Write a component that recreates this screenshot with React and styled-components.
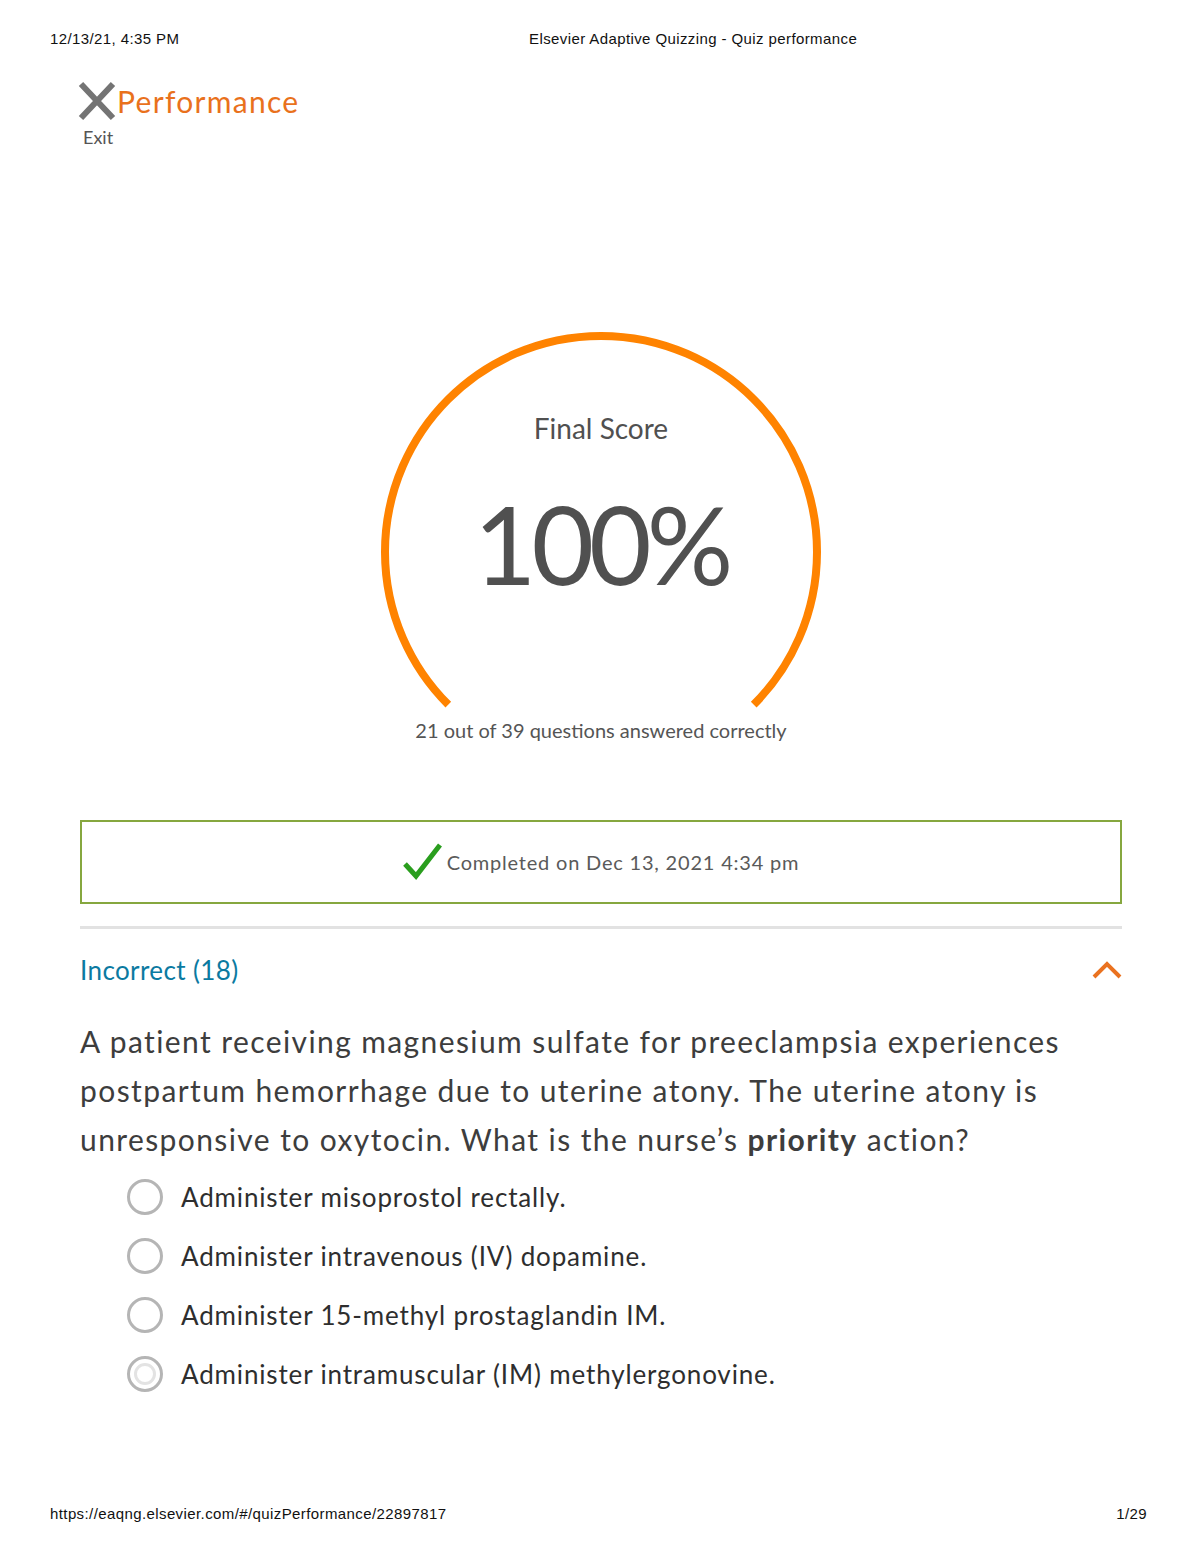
import React from 'react';
import styled, { createGlobalStyle } from 'styled-components';

const GlobalStyle = createGlobalStyle`
  html, body {
    margin: 0;
    padding: 0;
    background: #ffffff;
  }
  body {
    font-family: Lato, "Open Sans", sans-serif;
    color: #505050;
  }
`;

const Page = styled.div`
  width: 1200px;
  min-height: 1553px;
  display: flex;
  flex-direction: column;
  box-sizing: border-box;
`;

const PrintBar = styled.div`
  display: flex;
  align-items: center;
  padding: 0 53px 0 50px;
  height: 20px;
  font-family: "Liberation Sans", Arial, sans-serif;
  font-size: 15px;
  letter-spacing: 0.4px;
  color: #111;
  margin-top: ${(p) => (p.$bottom ? 'auto' : '28px')};
  margin-bottom: ${(p) => (p.$bottom ? '30px' : '0')};
  justify-content: ${(p) => (p.$bottom ? 'space-between' : 'flex-start')};
`;

const PrintDate = styled.span`
  width: 479px;
`;

const Content = styled.main`
  padding: 0 78px 0 80px;
  display: flex;
  flex-direction: column;
`;

const TopBar = styled.div`
  margin-top: 33px;
  display: flex;
  flex-direction: column;
  align-items: flex-start;
`;

const TitleRow = styled.div`
  display: flex;
  align-items: center;
  margin-left: -3px;
`;

const Title = styled.h1`
  margin: 0;
  font-weight: 400;
  font-size: 30px;
  color: #e9711c;
  letter-spacing: 1.3px;
  line-height: 40px;
`;

const ExitLabel = styled.span`
  font-size: 18px;
  color: #555;
  margin: 5px 0 0 3px;
  line-height: 22px;
`;

const Gauge = styled.div`
  position: relative;
  align-self: center;
  width: 448px;
  height: 384px;
  margin-top: 180px;
  display: flex;
  flex-direction: column;
  align-items: center;
`;

const GaugeArc = styled.svg`
  position: absolute;
  inset: 0;
`;

const GaugeLabel = styled.div`
  margin-top: 83px;
  font-size: 28px;
  line-height: 34px;
  color: #505050;
`;

const GaugeValue = styled.div`
  margin-top: 44px;
  font-size: 108px;
  line-height: 1;
  color: #505050;
  letter-spacing: -5px;
`;

const Caption = styled.div`
  align-self: center;
  margin-top: 5px;
  font-size: 20px;
  line-height: 26px;
  color: #555;
`;

const CompletedBox = styled.div`
  margin-top: 77px;
  height: 80px;
  border: 2px solid #86a73f;
  display: flex;
  align-items: center;
  justify-content: center;
  gap: 4px;
  font-size: 20px;
  letter-spacing: 0.8px;
  color: #5a5a5a;
`;

const Divider = styled.hr`
  margin: 22px 0 0;
  border: none;
  height: 3px;
  background: #e2e2e2;
`;

const SectionHead = styled.div`
  margin-top: 24px;
  display: flex;
  align-items: center;
  justify-content: space-between;
`;

const SectionTitle = styled.h2`
  margin: 0;
  font-weight: 400;
  font-size: 26px;
  line-height: 34px;
  letter-spacing: 0.4px;
  color: #0b7aa1;
`;

const Question = styled.p`
  margin: 30px 0 0;
  font-size: 30px;
  line-height: 49px;
  letter-spacing: 1.4px;
  color: #3d3d3d;
  strong {
    font-weight: 700;
  }
`;

const Options = styled.ul`
  list-style: none;
  margin: 15px 0 0;
  padding: 0 0 0 47px;
  display: flex;
  flex-direction: column;
  gap: 23px;
`;

const Option = styled.li`
  display: flex;
  align-items: center;
  gap: 18px;
  font-size: 26px;
  line-height: 36px;
  letter-spacing: 0.85px;
  color: #2e2e2e;
`;

const Radio = styled.span`
  width: 30px;
  height: 30px;
  border-radius: 50%;
  border: 3px solid #b5b5b5;
  flex-shrink: 0;
  display: flex;
  align-items: center;
  justify-content: center;
  &::after {
    content: '';
    width: 16px;
    height: 16px;
    border-radius: 50%;
    border: ${(p) => (p.$checked ? '3px solid #e3e3e3' : 'none')};
  }
`;

const CloseIcon = () => (
  <svg width="40" height="40" viewBox="0 0 40 40">
    <path d="M4 3 L36 37 M36 3 L4 37" stroke="#747474" strokeWidth="6" />
  </svg>
);

const CheckIcon = () => (
  <svg width="40" height="40" viewBox="0 0 40 40">
    <path d="M2 22 L13 34 L37 3" fill="none" stroke="#2a9e1e" strokeWidth="5" strokeLinejoin="miter" />
  </svg>
);

const ChevronUp = () => (
  <svg width="30" height="20" viewBox="0 0 30 20">
    <path d="M2 17 L15 4 L28 17" fill="none" stroke="#ea7220" strokeWidth="4" />
  </svg>
);

const options = [
  { text: 'Administer misoprostol rectally.' },
  { text: 'Administer intravenous (IV) dopamine.' },
  { text: 'Administer 15-methyl prostaglandin IM.' },
  { text: 'Administer intramuscular (IM) methylergonovine.', checked: true },
];

const App = () => {
  return (
    <Page>
      <GlobalStyle />
      <PrintBar>
        <PrintDate>12/13/21, 4:35 PM</PrintDate>
        <span>Elsevier Adaptive Quizzing - Quiz performance</span>
      </PrintBar>
      <Content>
        <TopBar>
          <TitleRow>
            <CloseIcon />
            <Title>Performance</Title>
          </TitleRow>
          <ExitLabel>Exit</ExitLabel>
        </TopBar>

        <Gauge>
          <GaugeArc width="448" height="384" viewBox="0 0 448 384">
            <path
              d="M71.3 376.7 A216 216 0 1 1 376.7 376.7"
              fill="none"
              stroke="#ff8300"
              strokeWidth="8"
            />
          </GaugeArc>
          <GaugeLabel>Final Score</GaugeLabel>
          <GaugeValue>100%</GaugeValue>
        </Gauge>
        <Caption>21 out of 39 questions answered correctly</Caption>

        <CompletedBox>
          <CheckIcon />
          Completed on Dec 13, 2021 4:34 pm
        </CompletedBox>
        <Divider />

        <SectionHead>
          <SectionTitle>Incorrect (18)</SectionTitle>
          <ChevronUp />
        </SectionHead>

        <Question>
          A patient receiving magnesium sulfate for preeclampsia experiences postpartum hemorrhage due
          to uterine atony. The uterine atony is unresponsive to oxytocin. What is the nurse’s{' '}
          <strong>priority</strong> action?
        </Question>

        <Options>
          {options.map((o) => (
            <Option key={o.text}>
              <Radio $checked={o.checked} />
              {o.text}
            </Option>
          ))}
        </Options>
      </Content>
      <PrintBar $bottom>
        <span>https://eaqng.elsevier.com/#/quizPerformance/22897817</span>
        <span>1/29</span>
      </PrintBar>
    </Page>
  );
};

export default App;
